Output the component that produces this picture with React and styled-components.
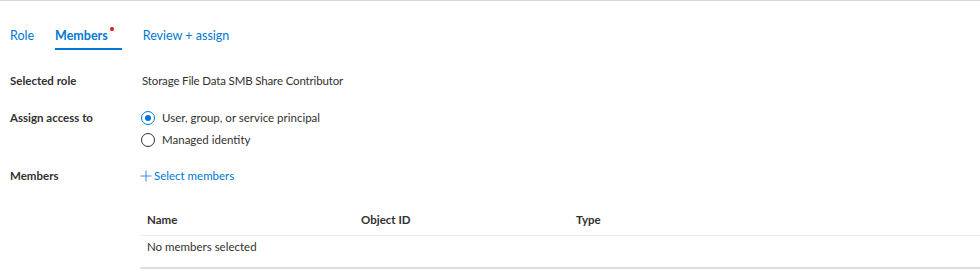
import React, { useState } from "react";
import styled, { createGlobalStyle } from "styled-components";

const GlobalStyle = createGlobalStyle`
  body {
    margin: 0;
    background: #ffffff;
    font-family: "Segoe UI", Lato, "Noto Sans", sans-serif;
    color: #323130;
  }
`;

const tabs = ["Role", "Members", "Review + assign"];

const columns = ["Name", "Object ID", "Type"];

const App = () => {
  const [active, setActive] = useState("Members");
  const [access, setAccess] = useState("user");

  return (
    <>
      <GlobalStyle />
      <Page>
        <TabBar>
          {tabs.map((t) => (
            <Tab key={t} $active={t === active} onClick={() => setActive(t)}>
              {t}
              {t === "Members" && <Dot />}
            </Tab>
          ))}
        </TabBar>

        <Form>
          <Label>Selected role</Label>
          <Value>Storage File Data SMB Share Contributor</Value>

          <Label>Assign access to</Label>
          <RadioGroup>
            <RadioRow onClick={() => setAccess("user")}>
              <Radio $checked={access === "user"} />
              User, group, or service principal
            </RadioRow>
            <RadioRow onClick={() => setAccess("mi")}>
              <Radio $checked={access === "mi"} />
              Managed identity
            </RadioRow>
          </RadioGroup>

          <Label>Members</Label>
          <LinkButton>
            <svg width="12" height="12" viewBox="0 0 12 12">
              <path d="M6 0.5v11M0.5 6h11" stroke="#3a8de0" strokeWidth="1" fill="none" />
            </svg>
            Select members
          </LinkButton>
        </Form>

        <Table>
          <HeadRow>
            {columns.map((c) => (
              <HeadCell key={c}>{c}</HeadCell>
            ))}
          </HeadRow>
          <BodyRow>
            <Cell>No members selected</Cell>
          </BodyRow>
        </Table>
      </Page>
    </>
  );
};

export default App;

const Page = styled.div`
  width: 980px;
  height: 275px;
  border-top: 1px solid #d6d6d6;
  overflow: hidden;
  font-size: 11.5px;
`;

const TabBar = styled.div`
  display: flex;
  gap: 21px;
  margin: 22px 0 0 10px;
  font-size: 12.5px;
`;

const Tab = styled.div`
  position: relative;
  height: 25px;
  line-height: 25px;
  padding-right: ${(p) => (p.$active ? "14px" : "0")};
  color: #0078d4;
  font-weight: ${(p) => (p.$active ? 700 : 400)};
  border-bottom: 2px solid ${(p) => (p.$active ? "#0078d4" : "transparent")};
  cursor: pointer;
`;

const Dot = styled.span`
  position: absolute;
  top: 4px;
  right: 8px;
  width: 4px;
  height: 4px;
  border-radius: 50%;
  background: #e81123;
`;

const Form = styled.div`
  display: grid;
  grid-template-columns: 132px 1fr;
  row-gap: 17px;
  margin: 21px 0 0 10px;
  line-height: 20px;
`;

const Label = styled.div`
  font-weight: 700;
  color: #323130;
`;

const Value = styled.div`
  color: #323130;
  letter-spacing: -0.15px;
`;

const RadioGroup = styled.div`
  display: flex;
  flex-direction: column;
  gap: 2px;
  margin-bottom: -1px;
`;

const RadioRow = styled.label`
  display: flex;
  align-items: center;
  gap: 7px;
  cursor: pointer;
`;

const Radio = styled.span`
  box-sizing: border-box;
  width: 14px;
  height: 14px;
  margin-left: -1px;
  border-radius: 50%;
  border: 1px solid ${(p) => (p.$checked ? "#0078d4" : "#323130")};
  display: flex;
  align-items: center;
  justify-content: center;

  &::after {
    content: "";
    width: 6px;
    height: 6px;
    border-radius: 50%;
    background: ${(p) => (p.$checked ? "#0078d4" : "transparent")};
  }
`;

const LinkButton = styled.div`
  display: flex;
  align-items: center;
  gap: 2px;
  margin-left: -2px;
  margin-top: -1px;
  color: #0078d4;
  cursor: pointer;
`;

const Table = styled.div`
  margin: 18px 0 0 140px;
  width: 900px;
`;

const HeadRow = styled.div`
  display: grid;
  grid-template-columns: 214px 215px 1fr;
  height: 31px;
  align-items: center;
  border-bottom: 1px solid #edebe9;
`;

const HeadCell = styled.div`
  padding-left: 7px;
  font-weight: 700;
`;

const BodyRow = styled.div`
  height: 31px;
  border-bottom: 2px solid #e1dfdd;
`;

const Cell = styled.div`
  padding: 1px 0 0 7px;
  line-height: 20px;
`;
